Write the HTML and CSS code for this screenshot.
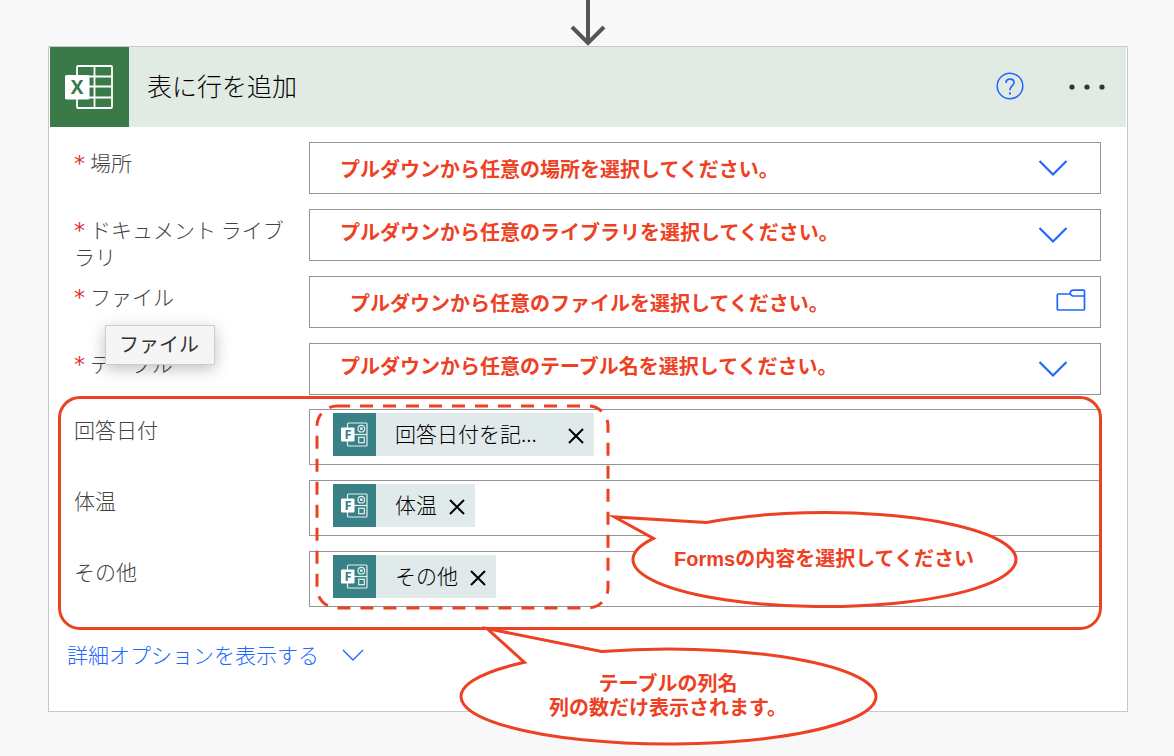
FILE: index.html
```html
<!DOCTYPE html>
<html lang="ja">
<head>
<meta charset="utf-8">
<meta name="viewport" content="width=device-width, initial-scale=1">
<title>表に行を追加</title>
<link rel="stylesheet" href="styles.css">
</head>
<body>
<svg class="sprite" aria-hidden="true">
  <symbol id="chevron" viewBox="0 0 30 18"><path d="M1.5 2 15 15.500 28.500 2" fill="none" stroke="currentColor" stroke-width="2.200"/></symbol>
  <symbol id="close" viewBox="0 0 16 16"><path d="M1 1 15 15M15 1 1 15" fill="none" stroke="currentColor" stroke-width="2"/></symbol>
  <symbol id="forms" viewBox="0 0 43 43">
    <rect width="43" height="43" fill="#388186"/>
    <g fill="none" stroke="#e6f2f2" stroke-width="1.200">
      <rect x="14.500" y="10" width="19.500" height="23" rx="1"/>
      <path d="M14.500 21.500H34"/>
      <circle cx="28.300" cy="15.700" r="3.300"/>
      <rect x="25.700" y="24.300" width="5.600" height="5.400"/>
    </g>
    <circle cx="28.300" cy="15.700" r="1.400" fill="#e6f2f2"/>
    <rect x="8" y="14.500" width="13.500" height="14" rx="1" fill="#fff"/>
    <text x="11.500" y="26" class="logo-letter" font-size="13" fill="#388186">F</text>
  </symbol>
</svg>

<main class="flow">
  <svg class="connector" viewBox="0 0 40 46" aria-hidden="true"><path d="M20 0V42M4 27 20 43 36 27" fill="none" stroke="#555" stroke-width="4"/></svg>

  <section class="card">
    <header class="card-header">
      <svg class="app-icon" viewBox="0 0 79 80" aria-hidden="true">
        <rect width="79" height="80" fill="#3a7a49"/>
        <g fill="none" stroke="#fff" stroke-width="1.800">
          <rect x="27" y="19" width="35" height="42" rx="1"/>
          <path d="M44.500 19V61M27 29.500H62M27 39.500H62M27 50.500H62"/>
        </g>
        <rect x="15" y="28" width="24.500" height="24.500" rx="1.500" fill="#fff"/>
        <text x="27" y="47" class="logo-letter" font-size="19" text-anchor="middle" fill="#3a7a49">X</text>
      </svg>
      <h1 class="card-title">表に行を追加</h1>
      <button class="icon-button" type="button" aria-label="ヘルプ">
        <svg class="help-icon" viewBox="0 0 28 28"><g fill="none" stroke="currentColor" stroke-width="1.500"><circle cx="14" cy="14" r="12.800"/><path d="M10 11C10 8.600 11.700 7.200 14 7.200S18 8.700 18 10.800C18 13.700 14 14.300 14 17.500V18.200" stroke-width="1.700"/></g><rect x="13" y="20.500" width="2" height="2" fill="currentColor"/></svg>
      </button>
      <button class="icon-button more" type="button" aria-label="メニュー">
        <svg class="more-icon" viewBox="0 0 36 6"><g fill="currentColor"><circle cx="3" cy="3" r="2.600"/><circle cx="18" cy="3" r="2.600"/><circle cx="33" cy="3" r="2.600"/></g></svg>
      </button>
    </header>

    <form class="card-body">
      <div class="row">
        <label class="label" for="site"><span class="required">*</span>場所</label>
        <div class="field">
          <select class="control" id="site"><option>プルダウンから任意の場所を選択してください。</option></select>
          <svg class="chevron"><use href="#chevron"/></svg>
        </div>
      </div>
      <div class="row">
        <label class="label" for="library"><span class="required">*</span>ドキュメント ライブラリ</label>
        <div class="field">
          <select class="control raised" id="library"><option>プルダウンから任意のライブラリを選択してください。</option></select>
          <svg class="chevron"><use href="#chevron"/></svg>
        </div>
      </div>
      <div class="row">
        <label class="label" for="file"><span class="required">*</span>ファイル</label>
        <div class="field">
          <input class="control path" id="file" type="text" value="プルダウンから任意のファイルを選択してください。">
          <button class="browse" type="button" aria-label="参照">
            <svg class="folder-icon" viewBox="0 0 30 22"><path d="M2.300 5H14L16.500 7H28.500M14 5C14.200 2.500 15.500 1.200 17.500 1.200H27.500Q28.500 1.200 28.500 2.200V20Q28.500 21 27.500 21H2.300Q1.300 21 1.300 20V6Q1.300 5 2.300 5" fill="none" stroke="currentColor" stroke-width="1.700"/></svg>
          </button>
        </div>
        <div class="tooltip" role="tooltip">ファイル</div>
      </div>
      <div class="row">
        <label class="label" for="table"><span class="required">*</span>テーブル</label>
        <div class="field">
          <select class="control raised" id="table"><option>プルダウンから任意のテーブル名を選択してください。</option></select>
          <svg class="chevron"><use href="#chevron"/></svg>
        </div>
      </div>

      <div class="columns">
        <div class="row">
          <span class="label" id="date-label">回答日付</span>
          <div class="field tokens" role="group" aria-labelledby="date-label">
            <span class="token"><svg class="token-icon"><use href="#forms"/></svg><span class="token-text long">回答日付を記...</span><button class="remove" type="button" aria-label="回答日付を削除"><svg class="close-icon"><use href="#close"/></svg></button></span>
          </div>
        </div>
        <div class="row">
          <span class="label" id="temp-label">体温</span>
          <div class="field tokens" role="group" aria-labelledby="temp-label">
            <span class="token"><svg class="token-icon"><use href="#forms"/></svg><span class="token-text">体温</span><button class="remove" type="button" aria-label="体温を削除"><svg class="close-icon"><use href="#close"/></svg></button></span>
          </div>
        </div>
        <div class="row">
          <span class="label" id="other-label">その他</span>
          <div class="field tokens" role="group" aria-labelledby="other-label">
            <span class="token"><svg class="token-icon"><use href="#forms"/></svg><span class="token-text">その他</span><button class="remove" type="button" aria-label="その他を削除"><svg class="close-icon"><use href="#close"/></svg></button></span>
          </div>
        </div>

        <div class="frame"></div>
        <svg class="dashes" viewBox="0 0 295 206" aria-hidden="true"><rect x="2" y="2" width="291" height="202" rx="20" fill="none" stroke="#ee4023" stroke-width="3" stroke-dasharray="13 10"/></svg>

        <div class="callout callout-forms">
          <svg class="bubble" viewBox="0 0 412 98" aria-hidden="true"><path d="M100.500 12.500A191.500 47 0 1 1 47.500 28.350L8.500 7Z" fill="#fff" stroke="#ee4023" stroke-width="3" stroke-miterlimit="10"/></svg>
          <p class="callout-text">Formsの内容を選択してください</p>
        </div>
        <div class="callout callout-columns">
          <svg class="bubble" viewBox="0 0 420 122" aria-hidden="true"><path d="M143.500 27.550A207.500 47.500 0 1 1 66.500 38.300L29 4.500Z" fill="#fff" stroke="#ee4023" stroke-width="3" stroke-miterlimit="10"/></svg>
          <p class="callout-text">テーブルの列名<br>列の数だけ表示されます。</p>
        </div>
      </div>

      <button class="advanced" type="button">詳細オプションを表示する<svg class="advanced-chevron" viewBox="0 0 22 14"><path d="M1 2 11 12 21 2" fill="none" stroke="currentColor" stroke-width="1.400"/></svg></button>
    </form>
  </section>
</main>
</body>
</html>
```
FILE: styles.css
```css
* {
  box-sizing: border-box;
}

body {
  margin: 0;
  background: #f8f8f8;
  color: #000;
  font-family: "Noto Sans CJK JP", sans-serif;
  font-size: 21px;
  font-weight: 300;
  line-height: 27px;
}

button,
select,
input {
  margin: 0;
  padding: 0;
  border: 0;
  background: none;
  color: inherit;
  font: inherit;
}

.sprite {
  position: absolute;
  width: 0;
  height: 0;
}

.logo-letter {
  font-family: "Open Sans", sans-serif;
  font-weight: 700;
}

.flow {
  display: flex;
  flex-direction: column;
  padding: 0 46px 44px 48px;
}

.connector {
  width: 40px;
  height: 46px;
  align-self: center;
}

.card {
  border: 1px solid #c8c8c8;
  background: #fff;
}

.card-header {
  display: flex;
  align-items: center;
  margin: 0 1px;
  padding-right: 21px;
  background: #e1ebe3;
}

.app-icon {
  width: 79px;
  height: 80px;
}

.card-title {
  flex: 1;
  margin: 0 0 0 18px;
  padding-bottom: 4px;
  font-size: 25px;
  font-weight: 300;
  line-height: 36px;
}

.icon-button {
  display: flex;
  padding-bottom: 2px;
  color: #2266ff;
}

.more {
  margin-left: 45px;
  padding: 0;
  color: #333;
}

.help-icon {
  width: 28px;
  height: 28px;
}

.more-icon {
  width: 36px;
  height: 6px;
}

.card-body {
  padding: 15px 26px 43px 25px;
}

.row {
  position: relative;
  display: grid;
  grid-template-columns: 235px 1fr;
  align-items: start;
}

.label {
  padding: 7px 16px 0 0;
  height: 52px;
  color: #444;
}

.required {
  margin-right: 5px;
  color: #e03030;
  font-family: "DejaVu Sans", sans-serif;
  font-size: 22px;
  font-weight: 400;
  line-height: 1;
}

.field {
  position: relative;
  display: flex;
  align-items: center;
  height: 52px;
  margin-bottom: 15px;
  border: 1px solid #949494;
}

.control {
  width: 100%;
  height: 100%;
  padding: 0 70px 0 30px;
  appearance: none;
  color: #ee4023;
  font-size: 20px;
  font-weight: 700;
}

.raised {
  padding-bottom: 8px;
}

.path {
  padding-left: 40px;
}

.chevron {
  position: absolute;
  right: 32px;
  width: 30px;
  height: 18px;
  color: #2266ff;
  pointer-events: none;
}

.browse {
  position: absolute;
  right: 14px;
  display: flex;
  padding-bottom: 4px;
  color: #2266ff;
}

.folder-icon {
  width: 30px;
  height: 22px;
}

.tooltip {
  position: absolute;
  z-index: 1;
  top: 49px;
  left: 31px;
  padding: 4px 15px 7px 13px;
  border: 1px solid #ccc;
  border-radius: 1px;
  background: #f5f5f5;
  box-shadow: 0 4px 16px rgba(0, 0, 0, 0.25);
  color: #333;
  font-size: 20px;
  font-weight: 400;
}

.columns {
  position: relative;
  margin-top: -1px;
}

.tokens {
  align-items: start;
  height: 56px;
  padding: 3px 23px;
}

.token {
  display: flex;
  align-items: center;
  padding-right: 10px;
  background: #e1eaea;
}

.token-icon {
  width: 43px;
  height: 43px;
}

.token-text {
  margin: 0 12px 0 19px;
  padding-bottom: 2px;
}

.long {
  width: 161px;
}

.remove {
  display: flex;
  padding-top: 3px;
}

.close-icon {
  width: 16px;
  height: 16px;
}

.frame {
  position: absolute;
  top: -13px;
  right: -1px;
  bottom: -8px;
  left: -16px;
  border: 3px solid #ee4023;
  border-radius: 22px;
  pointer-events: none;
}

.dashes {
  position: absolute;
  top: -5px;
  left: 241px;
  width: 295px;
  height: 206px;
  pointer-events: none;
}

.callout {
  position: absolute;
  display: flex;
  justify-content: center;
  color: #ee4023;
  font-family: "Liberation Sans", "Noto Sans CJK JP", sans-serif;
  font-size: 20px;
  font-weight: 700;
  line-height: 24px;
  text-align: center;
}

.callout-forms {
  top: 101px;
  left: 532px;
  width: 412px;
  padding: 37px 0 0 24px;
}

.callout-columns {
  top: 215px;
  left: 384px;
  width: 420px;
  padding-top: 48px;
}

.bubble {
  position: absolute;
  top: 0;
  left: 0;
  width: 100%;
  overflow: visible;
}

.callout-text {
  position: relative;
  margin: 0;
}

.advanced {
  display: flex;
  align-items: center;
  gap: 23px;
  margin: 19px 0 0 -7px;
  color: #2266ff;
}

.advanced-chevron {
  width: 22px;
  height: 14px;
}
```
